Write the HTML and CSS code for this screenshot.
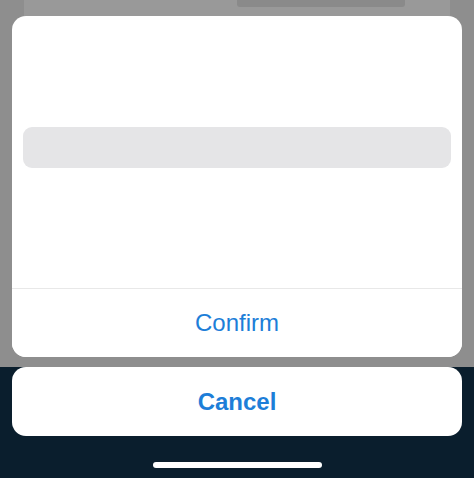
FILE: index.html
```html
<!DOCTYPE html>
<html lang="en">
  <head>
    <meta charset="UTF-8" />
    <meta name="viewport" content="width=device-width, initial-scale=1.0" />
    <title>Action Sheet</title>
    <link rel="stylesheet" href="styles.css">
  </head>
  <body>
    <div class="screen">
      <div class="dimmed">
        <!-- page behind the sheet, dimmed -->
        <div class="backdrop">
          <div class="backdrop-panel">
            <div class="backdrop-tab"></div>
          </div>
        </div>

        <div class="sheet">
          <div class="sheet-body">
            <div class="sheet-field"></div>
          </div>
          <button type="button" class="sheet-action">Confirm</button>
        </div>
      </div>

      <div class="footer">
        <button type="button" class="cancel-button">Cancel</button>
        <div class="home-indicator"></div>
      </div>
    </div>
  </body>
</html>
```

FILE: styles.css
```css
* {
  margin: 0;
  padding: 0;
  box-sizing: border-box;
}

body {
  font-family: "Liberation Sans", Arial, sans-serif;
  background: #0a1e2d;
  width: 474px;
  height: 478px;
  overflow: hidden;
}

.screen {
  display: flex;
  flex-direction: column;
  height: 478px;
}

.dimmed {
  height: 367px;
  background: #8e8e8e;
  padding: 0 12px 10px;
  display: flex;
  flex-direction: column;
}

.backdrop {
  height: 16px;
  padding: 0 12px;
}

.backdrop-panel {
  height: 100%;
  background: #999999;
  display: flex;
  justify-content: flex-end;
  padding-right: 45px;
}

.backdrop-tab {
  width: 168px;
  height: 7px;
  background: #8a8a8a;
  border-radius: 0 0 3px 3px;
}

.sheet {
  flex: 1;
  background: white;
  border-radius: 14px;
  display: flex;
  flex-direction: column;
  overflow: hidden;
}

.sheet-body {
  flex: 1;
  padding: 111px 11px 0;
}

.sheet-field {
  height: 41px;
  background: #e5e5e7;
  border-radius: 9px;
}

.sheet-action,
.cancel-button {
  border: none;
  background: white;
  color: #1d7ed8;
  font-family: inherit;
  font-size: 24px;
  cursor: pointer;
}

.sheet-action {
  height: 69px;
  border-top: 1px solid #e8e8e8;
}

.footer {
  flex: 1;
  display: flex;
  flex-direction: column;
  align-items: center;
  padding: 0 12px;
}

.cancel-button {
  width: 100%;
  height: 69px;
  border-radius: 14px;
  font-weight: bold;
}

.home-indicator {
  margin-top: 26px;
  width: 169px;
  height: 6px;
  border-radius: 3px;
  background: white;
}
```
